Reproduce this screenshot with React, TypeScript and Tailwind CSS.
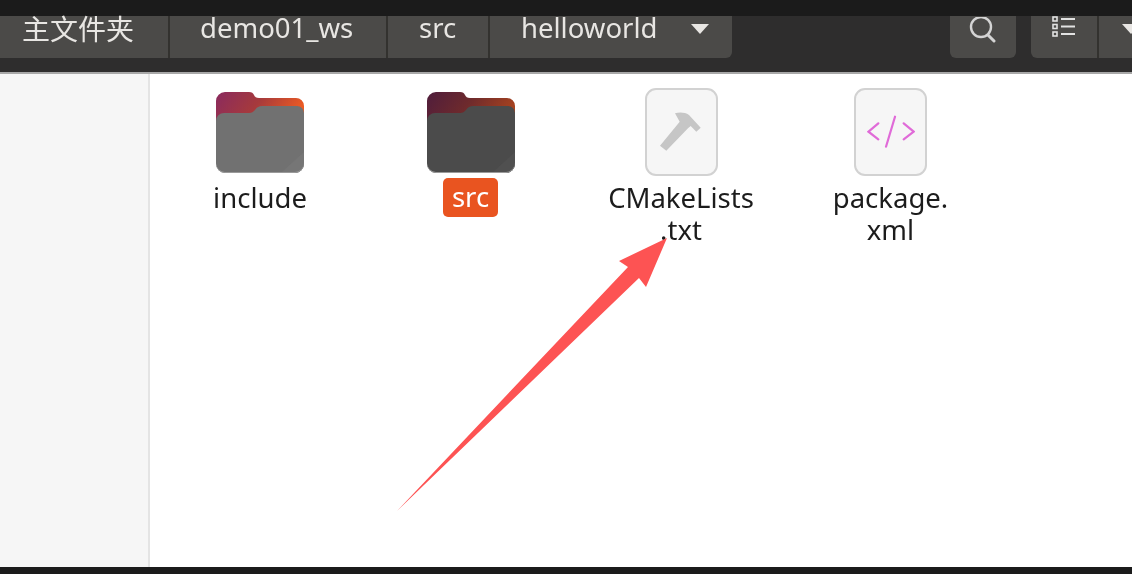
const labelFont = "font-['Noto_Sans','Noto_Sans_CJK_SC',sans-serif]";

function Folder({ selected }: { selected?: boolean }) {
  const id = selected ? "tabDark" : "tabLight";
  return (
    <svg width="90" height="84" viewBox="0 0 90 84">
      <defs>
        <linearGradient id={id} x1="0" y1="0" x2="1" y2="0.35">
          <stop offset="0" stopColor={selected ? "#4f1d3c" : "#8a2a5e"} />
          <stop offset="0.5" stopColor={selected ? "#6e2a2c" : "#a63a3c"} />
          <stop offset="1" stopColor={selected ? "#a8431f" : "#ee5c22"} />
        </linearGradient>
      </defs>
      <path d="M1 9a9 9 0 0 1 9-9h24c3 0 4 1 5 3 1 2 2 3 5 3h37a8 8 0 0 1 8 8v30H1z" fill={`url(#${id})`} />
      <path d="M1 29a8 8 0 0 1 8-8h25c3 0 4-1 6-3 2-3 4-4 7-4h35a7 7 0 0 1 7 7v51a9 9 0 0 1-9 9H10a9 9 0 0 1-9-9z" fill={selected ? "#4b4b4b" : "#717171"} />
      <path d="M89 60v12a9 9 0 0 1-9 9H66z" fill={selected ? "#505050" : "#767676"} />
      <path d="M1 71a9 9 0 0 0 9 9h70a9 9 0 0 0 9-9v1a9 9 0 0 1-9 9H10a9 9 0 0 1-9-9z" fill="#9a9a9a" />
    </svg>
  );
}

function FileIcon({ children }: { children: React.ReactNode }) {
  return (
    <div className="w-[73px] h-[88px] rounded-[11px] border-2 border-[#d2d2d2] bg-[#f6f6f6] flex items-center justify-center">
      {children}
    </div>
  );
}

function Item({ width, icon, children }: { width: string; icon: React.ReactNode; children: React.ReactNode }) {
  return (
    <div className={`${width} flex flex-col items-center`}>
      <div className="h-[88px] flex items-end justify-center">{icon}</div>
      {children}
    </div>
  );
}

function Label({ lines }: { lines: string[] }) {
  return (
    <div className="mt-[6px] text-[27.5px] leading-[32px] text-[#1c1c1c] text-center">
      {lines.map((l) => (
        <div key={l}>{l}</div>
      ))}
    </div>
  );
}

export default function App() {
  return (
    <div className={`w-[1132px] h-[574px] overflow-hidden relative flex flex-col bg-white blur-[0.4px] ${labelFont}`}>
      <div className="h-4 bg-[#1b1b1b] shrink-0" />

      {/* header bar */}
      <div className="h-[58px] shrink-0 bg-[#2e2d2d] border-b-2 border-[#a8a8a8] flex items-start justify-between">
        <div className="flex h-[42px] text-[27.500px] leading-[24px] text-[#e8e6e3] rounded-br-[6px] bg-[#4b4a48]">
          <div className="w-[170px] pl-[22px] border-r-2 border-[#33322f] whitespace-nowrap font-['Noto_Sans_CJK_SC',sans-serif] text-[28px]">主文件夹</div>
          <div className="w-[218px] pl-[30px] border-r-2 border-[#33322f]">demo01_ws</div>
          <div className="w-[102px] pl-[31px] border-r-2 border-[#33322f]">src</div>
          <div className="w-[242px] pl-[31px] flex items-start gap-[33px] whitespace-nowrap">
            helloworld
            <svg width="20" height="12" viewBox="0 0 20 12" className="mt-[7px] shrink-0">
              <path d="M1 1h18l-9 10z" fill="#e8e6e3" />
            </svg>
          </div>
        </div>
        <div className="flex">
          <div className="w-[66px] h-[42px] rounded-b-[6px] bg-[#4b4a48] flex justify-center">
            <svg width="30" height="26" viewBox="0 0 30 26" className="mt-[1px]">
              <circle cx="13" cy="10" r="10" fill="none" stroke="#d4d4d4" strokeWidth="2.4" />
              <path d="M20 18l6 6" stroke="#d4d4d4" strokeWidth="3" strokeLinecap="round" />
            </svg>
          </div>
          <div className="w-[68px] h-[42px] ml-[15px] rounded-bl-[6px] bg-[#4b4a48] border-r-2 border-[#33322f] flex justify-center">
            <svg width="24" height="22" viewBox="0 0 24 22">
              <g fill="none" stroke="#e2e2e2" strokeWidth="1.6">
                <rect x="1" y="1" width="4" height="4" />
                <rect x="1" y="8.5" width="4" height="4" />
                <rect x="1" y="16" width="4" height="4" />
              </g>
              <path d="M9 3h14M9 10.500h14M9 18h14" stroke="#e2e2e2" strokeWidth="1.800" />
            </svg>
          </div>
          <div className="w-[33px] h-[42px] bg-[#4b4a48] pl-[22px] pt-[7px]">
            <svg width="20" height="12" viewBox="0 0 20 12">
              <path d="M1 1h18l-9 10z" fill="#e8e6e3" />
            </svg>
          </div>
        </div>
      </div>

      <div className="flex-1 flex min-h-0">
        {/* sidebar */}
        <div className="w-[150px] shrink-0 bg-[#f6f6f6] border-r-2 border-[#e4e4e4]" />

        {/* file grid */}
        <div className="flex-1 flex items-start pl-[5px] pt-[14px]">
          <Item width="w-[210px]" icon={<Folder />}>
            <Label lines={["include"]} />
          </Item>
          <Item width="w-[211px]" icon={<Folder selected />}>
            <div className="mt-[2px] h-[39px] px-[9px] rounded-[5px] bg-[#e95420] text-[27.5px] leading-[38px] text-white">src</div>
          </Item>
          <Item
            width="w-[210px]"
            icon={
              <FileIcon>
                <svg width="44" height="44" viewBox="0 0 44 44">
                  <path d="M1 35.700L7.300 40.700 29 18.300 31.700 16 37.300 21.700 41.700 17.700 30 5C26 2 20 2 16 3.300L20.700 11.700z" fill="#c6c6c6" />
                </svg>
              </FileIcon>
            }
          >
            <Label lines={["CMakeLists", ".txt"]} />
          </Item>
          <Item
            width="w-[209px]"
            icon={
              <FileIcon>
                <svg width="48" height="34" viewBox="-1 -1 48 34" fill="none" stroke="#e06bd8" strokeWidth="2.200" strokeLinecap="round">
                  <path d="M10.300 7.300L.5 15.700l9.800 7.600M35.700 7.300l10 8.400-10 7.600M27 .7L18 30.700" />
                </svg>
              </FileIcon>
            }
          >
            <Label lines={["package.", "xml"]} />
          </Item>
        </div>
      </div>

      <div className="h-[7px] bg-[#1b1b1b] shrink-0" />

      {/* annotation arrow */}
      <svg width="1132" height="574" viewBox="0 0 1132 574" className="absolute inset-0 pointer-events-none">
        <path d="M397 511L628 267 619 261 667 238 646 287 639 278z" fill="#fd5353" />
      </svg>
    </div>
  );
}
